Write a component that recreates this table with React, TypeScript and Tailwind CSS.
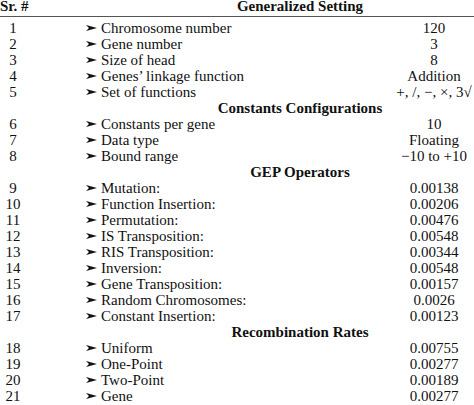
type Row = { n: number; label: string; value: string };
type Section = { title?: string; rows: Row[] };

const sections: Section[] = [
  {
    rows: [
      { n: 1, label: "Chromosome number", value: "120" },
      { n: 2, label: "Gene number", value: "3" },
      { n: 3, label: "Size of head", value: "8" },
      { n: 4, label: "Genes\u2019 linkage function", value: "Addition" },
      { n: 5, label: "Set of functions", value: "+, /, \u2212, \u00d7, 3\u221a" },
    ],
  },
  {
    title: "Constants Configurations",
    rows: [
      { n: 6, label: "Constants per gene", value: "10" },
      { n: 7, label: "Data type", value: "Floating" },
      { n: 8, label: "Bound range", value: "\u221210 to +10" },
    ],
  },
  {
    title: "GEP Operators",
    rows: [
      { n: 9, label: "Mutation:", value: "0.00138" },
      { n: 10, label: "Function Insertion:", value: "0.00206" },
      { n: 11, label: "Permutation:", value: "0.00476" },
      { n: 12, label: "IS Transposition:", value: "0.00548" },
      { n: 13, label: "RIS Transposition:", value: "0.00344" },
      { n: 14, label: "Inversion:", value: "0.00548" },
      { n: 15, label: "Gene Transposition:", value: "0.00157" },
      { n: 16, label: "Random Chromosomes:", value: "0.0026" },
      { n: 17, label: "Constant Insertion:", value: "0.00123" },
    ],
  },
  {
    title: "Recombination Rates",
    rows: [
      { n: 18, label: "Uniform", value: "0.00755" },
      { n: 19, label: "One-Point", value: "0.00277" },
      { n: 20, label: "Two-Point", value: "0.00189" },
      { n: 21, label: "Gene", value: "0.00277" },
    ],
  },
];

function Arrow() {
  return (
    <svg width="11" height="6" viewBox="0 0 11 6" className="shrink-0 mr-[4px]">
      <path d="M0 0 L11 3 L0 6 L3 3 Z" fill="#111" />
    </svg>
  );
}

export default function App() {
  return (
    <div className="w-[474px] h-[405px] overflow-hidden bg-white text-[#111]">
      <div
        className="w-[600px] text-[15px] leading-[16px]"
        style={{ fontFamily: '"Liberation Serif", "Times New Roman", serif' }}
      >
        {/* header */}
        <div className="grid grid-cols-[26px_548px] font-bold leading-[12px] pb-[4px] border-b border-[#555]">
          <div className="text-center whitespace-nowrap">Sr. #</div>
          <div className="text-center">Generalized Setting</div>
        </div>
        <div className="pt-[3px]">
          {sections.map((s, i) => (
            <div key={i}>
              {s.title && <div className="text-center font-bold">{s.title}</div>}
              {s.rows.map((r) => (
                <div key={r.n} className="grid grid-cols-[26px_342px_132px]">
                  <div className="text-center">{r.n}</div>
                  <div className="flex items-center pl-[60px] whitespace-nowrap">
                    <Arrow />
                    <span>{r.label}</span>
                  </div>
                  <div className="text-center whitespace-nowrap">{r.value}</div>
                </div>
              ))}
            </div>
          ))}
        </div>
      </div>
    </div>
  );
}
